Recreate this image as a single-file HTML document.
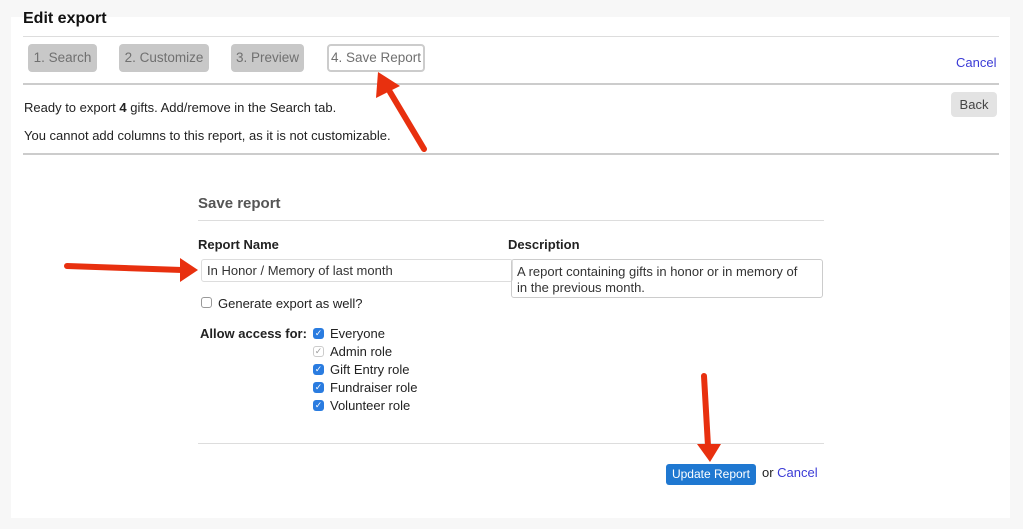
<!DOCTYPE html>
<html><head><style>
body{margin:0;width:1023px;height:529px;background:#f7f7f7;font-family:"Liberation Sans",Arial,sans-serif;position:relative;overflow:hidden}
.p{position:absolute;left:11px;top:17px;width:999px;height:501px;background:#fff}
.a{position:absolute}
.tab{position:absolute;top:44px;height:28px;line-height:28px;background:#c8c8c8;color:#707070;font-size:13.5px;border-radius:4px;text-align:center}
.hr{position:absolute;height:0;border-top:1px solid #ddd}
.cb{position:absolute;width:11px;height:11px;border-radius:3px;background:#2a7ce0;color:#fff;font-size:9px;line-height:11px;text-align:center}
.t{position:absolute;font-size:13px;color:#222}
</style></head><body>
<div class="p"></div>
<div class="a" style="left:23px;top:10px;font-size:16px;font-weight:bold;color:#111">Edit export</div>
<div class="hr" style="left:23px;width:976px;top:36px"></div>
<div class="tab" style="left:28px;width:69px">1. Search</div>
<div class="tab" style="left:119px;width:90px">2. Customize</div>
<div class="tab" style="left:231px;width:73px">3. Preview</div>
<div class="tab" style="left:327px;width:98px;background:#fff;border:2px solid #ccc;box-sizing:border-box;line-height:24px;top:44px">4. Save Report</div>
<div class="a" style="left:956px;top:55px;font-size:13px;color:#3b3bd6">Cancel</div>
<div class="hr" style="left:23px;width:976px;top:83px;border-top:2px solid #ccc"></div>
<div class="t" style="left:24px;top:100px">Ready to export <b>4</b> gifts. Add/remove in the Search tab.</div>
<div class="t" style="left:24px;top:128px">You cannot add columns to this report, as it is not customizable.</div>
<div class="a" style="left:951px;top:92px;width:46px;height:25px;line-height:25px;background:#e3e3e3;border-radius:4px;font-size:13px;color:#444;text-align:center">Back</div>
<div class="hr" style="left:23px;width:976px;top:153px;border-top:2px solid #ccc"></div>
<div class="a" style="left:198px;top:195px;font-size:15px;font-weight:bold;color:#555">Save report</div>
<div class="hr" style="left:198px;width:626px;top:220px"></div>
<div class="t" style="left:198px;top:237px;font-weight:bold">Report Name</div>
<div class="t" style="left:508px;top:237px;font-weight:bold">Description</div>
<div class="a" style="left:201px;top:259px;width:312px;height:23px;border:1px solid #ddd;border-radius:3px;box-sizing:border-box;font-size:13px;color:#333;line-height:22px;padding-left:5px">In Honor / Memory of last month</div>
<div class="a" style="left:511px;top:259px;width:312px;height:39px;border:1px solid #ccc;border-radius:3px;box-sizing:border-box;font-size:13px;color:#333;line-height:16px;padding:4px 5px">A report containing gifts in honor or in memory of<br>in the previous month.</div>
<div class="a" style="left:201px;top:297px;width:11px;height:11px;border:1px solid #999;border-radius:3px;box-sizing:border-box"></div>
<div class="t" style="left:218px;top:296px">Generate export as well?</div>
<div class="t" style="left:200px;top:326px;font-weight:bold">Allow access for:</div>
<div class="cb" style="left:313px;top:328px">✓</div><div class="t" style="left:330px;top:326px">Everyone</div>
<div class="cb" style="left:313px;top:346px;background:#fff;border:1px solid #ccc;box-sizing:border-box;color:#999;line-height:9px">✓</div><div class="t" style="left:330px;top:344px">Admin role</div>
<div class="cb" style="left:313px;top:364px">✓</div><div class="t" style="left:330px;top:362px">Gift Entry role</div>
<div class="cb" style="left:313px;top:382px">✓</div><div class="t" style="left:330px;top:380px">Fundraiser role</div>
<div class="cb" style="left:313px;top:400px">✓</div><div class="t" style="left:330px;top:398px">Volunteer role</div>
<div class="hr" style="left:198px;width:626px;top:443px"></div>
<div class="a" style="left:666px;top:464px;width:90px;height:21px;line-height:21px;background:#1f78d1;border-radius:3px;color:#fff;font-size:12px;text-align:center">Update Report</div>
<div class="t" style="left:762px;top:465px">or <span style="color:#3b3bd6">Cancel</span></div>
<svg class="a" style="left:0;top:0" width="1023" height="529">
<g stroke="#e8300f" stroke-width="6" stroke-linecap="round" fill="#e8300f">
<line x1="424" y1="149" x2="390" y2="92"/>
<line x1="67" y1="266" x2="182" y2="270"/>
<line x1="704" y1="376" x2="708" y2="446"/>
</g>
<g fill="#e8300f">
<polygon points="378,72 376,98 400,86"/>
<polygon points="198,270 180,258 180,282"/>
<polygon points="710,462 697,444 721,444"/>
</g>
</svg>
</body></html>
